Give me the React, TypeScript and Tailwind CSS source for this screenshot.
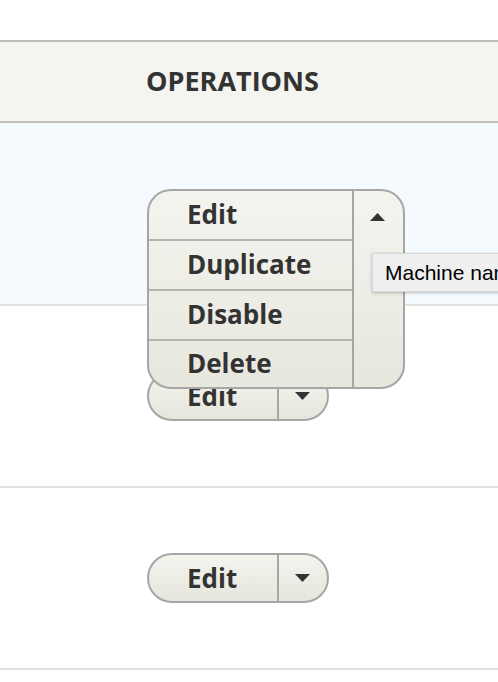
const font = { fontFamily: '"Open Sans", "DejaVu Sans", sans-serif' };

function Arrow({ up = false }: { up?: boolean }) {
  return (
    <svg width="15" height="8" viewBox="0 0 15 8" className="block">
      {up ? <polygon points="0,8 15,8 7.5,0" fill="#333" /> : <polygon points="0,0 15,0 7.5,8" fill="#333" />}
    </svg>
  );
}

// closed dropbutton: main action + toggle
function DropButton() {
  return (
    <div className="flex h-[50px] w-[182px] rounded-full border-2 border-[#a6a6a6] bg-gradient-to-b from-[#f4f4ef] to-[#e6e6dd]">
      <div className="flex w-[128px] items-center pl-[38px] text-[26px] font-bold text-[#333]">Edit</div>
      <div className="flex flex-1 items-center justify-center border-l-2 border-[#a6a6a6] pr-[2px]">
        <Arrow />
      </div>
    </div>
  );
}

// open dropbutton, list hangs over the next row
function OpenDropButton() {
  const items = ["Edit", "Duplicate", "Disable", "Delete"];
  return (
    <div className="relative h-[50px] w-[258px]">
      <div className="absolute left-0 top-0 z-10 flex w-[258px] rounded-[24px] border-2 border-[#a6a6a6] bg-gradient-to-b from-[#f4f4ef] to-[#e8e7de]">
        <div className="flex w-[203px] flex-col">
          {items.map((item, i) => (
            <div
              key={item}
              className={`flex items-center pl-[38px] text-[26px] font-bold text-[#333] ${
                i < items.length - 1 ? "h-[50px] border-b-2 border-[#b4b4ae]" : "h-[46px]"
              }`}
            >
              {item}
            </div>
          ))}
        </div>
        <div className="flex flex-1 justify-center border-l-2 border-[#a6a6a6] pt-[22px] pr-[2px]">
          <Arrow up />
        </div>
      </div>
    </div>
  );
}

export default function App() {
  return (
    <div className="relative h-[682px] w-[498px] overflow-hidden bg-white" style={font}>
      <div className="h-[40px]" />
      {/* header */}
      <div className="flex h-[83px] items-center border-y-2 border-[#bfbfba] bg-[#f4f4f0] pl-[146px]">
        <span className="text-[27px] font-bold text-[#333]">OPERATIONS</span>
      </div>

      {/* rows */}
      <div className="flex h-[183px] items-center border-b-2 border-[#e3e2dc] bg-[#f5fafe] pl-[147px]">
        <OpenDropButton />
      </div>
      <div className="flex h-[182px] items-center border-b-2 border-[#e3e2dc] pl-[147px]">
        <DropButton />
      </div>
      <div className="flex h-[182px] items-center border-b-2 border-[#e3e2dc] pl-[147px]">
        <DropButton />
      </div>

      {/* tooltip */}
      <div
        className="absolute left-[372px] top-[253px] z-20 flex h-[39px] w-[220px] items-center whitespace-nowrap border border-[#d8d8d8] bg-[#efefef] pl-[12px] text-[21px] text-black shadow-[0_1px_3px_rgba(0,0,0,0.25)]"
        style={{ fontFamily: '"Liberation Sans", Arial, sans-serif' }}
      >
        Machine name: duplicate
      </div>
    </div>
  );
}
